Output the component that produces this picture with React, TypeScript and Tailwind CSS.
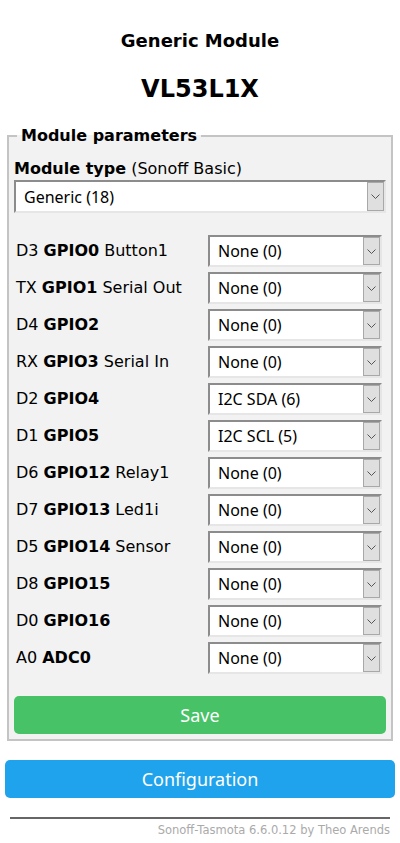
import React from "react"

const ROWS: { pin: string; gpio: string; name?: string; value: string }[] = [
  { pin: "D3", gpio: "GPIO0", name: "Button1", value: "None (0)" },
  { pin: "TX", gpio: "GPIO1", name: "Serial Out", value: "None (0)" },
  { pin: "D4", gpio: "GPIO2", value: "None (0)" },
  { pin: "RX", gpio: "GPIO3", name: "Serial In", value: "None (0)" },
  { pin: "D2", gpio: "GPIO4", value: "I2C SDA (6)" },
  { pin: "D1", gpio: "GPIO5", value: "I2C SCL (5)" },
  { pin: "D6", gpio: "GPIO12", name: "Relay1", value: "None (0)" },
  { pin: "D7", gpio: "GPIO13", name: "Led1i", value: "None (0)" },
  { pin: "D5", gpio: "GPIO14", name: "Sensor", value: "None (0)" },
  { pin: "D8", gpio: "GPIO15", value: "None (0)" },
  { pin: "D0", gpio: "GPIO16", value: "None (0)" },
  { pin: "A0", gpio: "ADC0", value: "None (0)" },
]

function Select({ value, className }: { value: string; className?: string }) {
  return (
    <div
      className={
        "flex items-stretch bg-white border-2 border-t-[#8c8c8c] border-l-[#8c8c8c] border-b-[#e6e6e6] border-r-[#e6e6e6] " +
        (className ?? "")
      }
    >
      <span className="flex-1 flex items-center pl-[8px] text-[16px] text-black font-['Noto_Sans',sans-serif] truncate">
        {value}
      </span>
      <span className="w-[17px] flex items-center justify-center bg-[#dfdfdf] border border-[#a8a8a8]">
        <svg width="9" height="5" viewBox="0 0 9 5" fill="none">
          <path d="M0.5 0.5L4.5 4.5L8.5 0.5" stroke="#555" strokeWidth="1" />
        </svg>
      </span>
    </div>
  )
}

export default function App() {
  return (
    <div className="min-h-screen bg-white px-[5px] font-['DejaVu_Sans',Verdana,sans-serif] text-black">
      <div className="text-center pt-[29px]">
        <h3 className="text-[18px] font-bold leading-[24px]">Generic Module</h3>
        <h2 className="text-[24px] font-bold leading-[32px] mt-[20px]">VL53L1X</h2>
      </div>

      <fieldset className="mt-[22px] mx-[2px] border-2 border-[#c4c4c4] bg-[#f2f2f2] px-[5px] pb-[5px]">
        <legend className="px-[4px] ml-[3px] text-[16px] font-bold leading-[18px]">Module parameters</legend>
        <p className="text-[16px] leading-[20px] mt-[14px]">
          <b>Module type</b> (Sonoff Basic)
        </p>
        <Select value="Generic (18)" className="h-[33px] mt-[1px]" />

        <div className="mt-[22px] flex flex-col gap-[5px]">
          {ROWS.map((r) => (
            <div key={r.gpio} className="flex items-center justify-between">
              <span className="pl-[2px] text-[16px] leading-[20px] whitespace-nowrap">
                {r.pin} <b>{r.gpio}</b>
                {r.name ? ` ${r.name}` : ""}
              </span>
              <Select value={r.value} className="w-[174px] h-[32px] mr-[4px]" />
            </div>
          ))}
        </div>

        <button className="mt-[22px] w-full h-[38px] rounded-[5px] bg-[#47c266] text-white text-[18px] font-['Noto_Sans',sans-serif]">
          Save
        </button>
      </fieldset>

      <button className="mt-[19px] w-full h-[38px] rounded-[5px] bg-[#1fa3ec] text-white text-[18px] font-['Noto_Sans',sans-serif]">
        Configuration
      </button>

      <div className="mx-[5px] mt-[19px] border-t-2 border-[#666]" />
      <p className="mx-[5px] mt-[3px] text-right text-[11.5px] text-[#aaa]">Sonoff-Tasmota 6.6.0.12 by Theo Arends</p>
    </div>
  )
}
